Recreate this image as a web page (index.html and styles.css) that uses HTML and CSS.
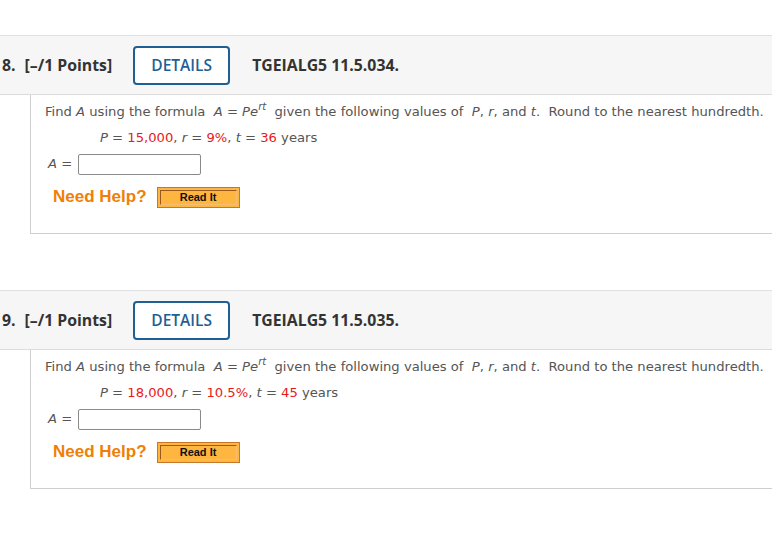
FILE: index.html
```html
<!DOCTYPE html>
<html>
<head>
<meta charset="utf-8">
<link rel="stylesheet" href="styles.css">
</head>
<body>
<div class="page">
  <section class="question">
    <div class="q-head">
      <span class="q-num">8.</span>
      <span class="q-points">[–/1 Points]</span>
      <button class="details">DETAILS</button>
      <span class="q-code">TGEIALG5 11.5.034.</span>
    </div>
    <div class="q-body">
      <div class="row prompt">Find <i>A</i> using the formula &nbsp;<i>A</i> = <i>Pe</i><sup><i>rt</i></sup>&nbsp; given the following values of &nbsp;<i>P</i>, <i>r</i>, and <i>t</i>.&nbsp; Round to the nearest hundredth.</div>
      <div class="row values"><i>P</i> = <span class="red">15,000</span>, <i>r</i> = <span class="red">9%</span>, <i>t</i> = <span class="red">36</span> years</div>
      <div class="row answer"><span class="lbl"><i>A</i> =</span><span class="input"></span></div>
      <div class="row help"><span class="need">Need Help?</span><span class="readit"><span class="readit-in">Read It</span></span></div>
    </div>
  </section>
  <section class="question">
    <div class="q-head">
      <span class="q-num">9.</span>
      <span class="q-points">[–/1 Points]</span>
      <button class="details">DETAILS</button>
      <span class="q-code">TGEIALG5 11.5.035.</span>
    </div>
    <div class="q-body">
      <div class="row prompt">Find <i>A</i> using the formula &nbsp;<i>A</i> = <i>Pe</i><sup><i>rt</i></sup>&nbsp; given the following values of &nbsp;<i>P</i>, <i>r</i>, and <i>t</i>.&nbsp; Round to the nearest hundredth.</div>
      <div class="row values"><i>P</i> = <span class="red">18,000</span>, <i>r</i> = <span class="red">10.5%</span>, <i>t</i> = <span class="red">45</span> years</div>
      <div class="row answer"><span class="lbl"><i>A</i> =</span><span class="input"></span></div>
      <div class="row help"><span class="need">Need Help?</span><span class="readit"><span class="readit-in">Read It</span></span></div>
    </div>
  </section>
</div>
</body>
</html>
```
FILE: styles.css
```css
html, body {
  margin: 0;
  padding: 0;
  background: #fff;
  overflow: hidden;
}
.page {
  width: 800px;
  padding-top: 35px;
}
.question {
  margin-bottom: 56px;
}
.q-head {
  height: 58px;
  border-top: 1px solid #e0e0e0;
  border-bottom: 1px solid #dcdcdc;
  background: #f6f6f6;
  display: flex;
  align-items: center;
  padding-left: 2px;
  font-family: "Open Sans", sans-serif;
  font-weight: 700;
  font-size: 15.8px;
  color: #333;
}
.q-num {
  margin-right: 9px;
}
.q-points {
  margin-right: 21px;
}
.details {
  box-sizing: border-box;
  width: 97px;
  height: 39px;
  border: 2px solid #1f5f94;
  border-radius: 4px;
  background: #fff;
  color: #1f5f94;
  font-family: "Open Sans", sans-serif;
  font-weight: 600;
  font-size: 15.5px;
  padding: 0;
  margin-right: 22px;
}
.q-code {
  font-weight: 700;
}
.q-body {
  margin-left: 30px;
  border-left: 1px solid #cfcfcf;
  border-bottom: 1px solid #cfcfcf;
  padding: 7px 0 23px 14px;
  font-family: "DejaVu Sans", Verdana, sans-serif;
  font-size: 13.15px;
  color: #555;
}
.row {
  height: 20px;
  line-height: 20px;
  display: flex;
  align-items: center;
  white-space: pre;
}
.prompt {
  display: block;
}
.prompt sup {
  font-size: 10px;
  line-height: 0;
  vertical-align: 6px;
}
.values {
  display: block;
  margin-top: 6px;
  padding-left: 55px;
}
.red {
  color: #e8191b;
}
.answer {
  margin-top: 6px;
  padding-left: 3px;
}
.lbl {
  width: 30px;
}
.input {
  box-sizing: border-box;
  width: 123px;
  height: 21px;
  border: 1px solid #8a8a8a;
  border-radius: 2px;
  background: #fff;
}
.help {
  margin-top: 10px;
  height: 26px;
  padding-left: 8px;
}
.need {
  font-family: "Liberation Sans", Arial, sans-serif;
  font-weight: 700;
  font-size: 17px;
  color: #ef8005;
  margin-right: 10px;
}
.readit {
  box-sizing: border-box;
  width: 83px;
  height: 21px;
  border: 1px solid #c7772a;
  background: #ffb640;
  padding: 2px;
  display: flex;
}
.readit-in {
  flex: 1;
  border: 1px solid #9a5a1f;
  border-right-color: #f4c070;
  border-bottom-color: #f4c070;
  display: flex;
  align-items: center;
  justify-content: center;
  font-family: "Liberation Sans", Arial, sans-serif;
  font-weight: 700;
  font-size: 11px;
  color: #111;
  line-height: 1;
}
```
